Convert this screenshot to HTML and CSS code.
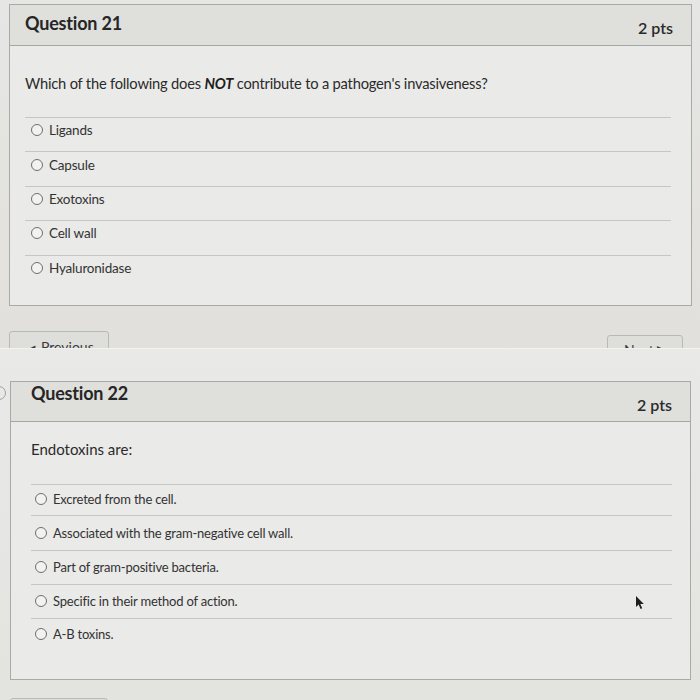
FILE: index.html
```html
<!DOCTYPE html>
<html>
<head>
<meta charset="utf-8">
<link rel="stylesheet" href="styles.css">
</head>
<body>
<section class="shot shot-top">
  <div class="card card-top">
    <div class="card-head">
      <h2 class="q-title">Question 21</h2>
      <span class="pts">2 pts</span>
    </div>
    <div class="card-body">
      <p class="q-text">Which of the following does <b><i>NOT</i></b> contribute to a pathogen's invasiveness?</p>
      <ul class="answers">
        <li><span class="radio"></span>Ligands</li>
        <li><span class="radio"></span>Capsule</li>
        <li><span class="radio"></span>Exotoxins</li>
        <li><span class="radio"></span>Cell wall</li>
        <li><span class="radio"></span>Hyaluronidase</li>
      </ul>
    </div>
  </div>
  <div class="nav">
    <div class="btn btn-prev"><span class="tri">◀</span>Previous</div>
    <div class="btn btn-next">Next ▶</div>
  </div>
</section>
<section class="shot shot-bottom">
  <span class="edge-dot"></span>
  <div class="card card-bot">
    <div class="card-head">
      <h2 class="q-title">Question 22</h2>
      <span class="pts">2 pts</span>
    </div>
    <div class="card-body">
      <p class="q-text">Endotoxins are:</p>
      <ul class="answers">
        <li><span class="radio"></span>Excreted from the cell.</li>
        <li><span class="radio"></span>Associated with the gram-negative cell wall.</li>
        <li><span class="radio"></span>Part of gram-positive bacteria.</li>
        <li><span class="radio"></span>Specific in their method of action.<svg class="cursor" width="10" height="15" viewBox="0 0 10 15"><path d="M1 1 L1 12 L3.6 9.6 L5.6 14 L7.2 13.3 L5.3 9 L8.8 9 Z" fill="#1f1f22"/></svg></li>
        <li><span class="radio"></span>A-B toxins.</li>
      </ul>
    </div>
  </div>
  <div class="nav nav-bot">
    <div class="btn btn-prev2"></div>
  </div>
</section>
</body>
</html>
```
FILE: styles.css
```css
* { box-sizing: border-box; }
html, body { margin: 0; padding: 0; }
body {
  width: 700px;
  height: 700px;
  overflow: hidden;
  font-family: Lato, "Open Sans", sans-serif;
  color: #2b2b2b;
  background: #e4e4e0;
}
.shot { position: relative; overflow: hidden; }
.shot-top {
  height: 348px;
  background: linear-gradient(180deg, #e6e6e4 0%, #e1e0dc 100%);
  padding: 4px 9px 0 9px;
}
.shot-bottom {
  height: 352px;
  background: linear-gradient(180deg, #e9eae7 0%, #e3e4e0 100%);
  padding: 32px 10px 0 10px;
  border-top: 1px solid #f2f2f0;
}
.card {
  border: 1px solid #a9a9a6;
  background: #eaeae8;
}
.card-top { width: 683px; }
.card-bot { width: 681px; }
.card-head {
  display: flex;
  justify-content: space-between;
  background: #dfdfdc;
  border-bottom: 1px solid #a6a6a3;
}
.card-top .card-head { height: 41px; padding: 7px 18px 0 15px; }
.card-bot .card-head { height: 40px; padding: 0 18px 0 20px; }
.q-title {
  margin: 0;
  font-size: 18px;
  font-weight: 700;
  color: #262626;
  letter-spacing: -0.2px;
}
.pts {
  font-size: 16px;
  font-weight: 600;
  color: #2a2a2a;
  padding-top: 6px;
}
.card-bot .pts { padding-top: 13px; }
.card-body { padding: 0 20px 0 15px; }
.card-top .card-body { height: 259px; }
.card-bot .card-body { height: 257px; padding: 0 18px 0 20px; }
.q-text {
  margin: 0;
  font-size: 14.7px;
  color: #2b2b2b;
  letter-spacing: -0.2px;
}
.card-top .q-text { padding: 28px 0 25px; }
.card-bot .q-text { padding: 18px 0 26px; font-size: 15px; letter-spacing: 0; }
.q-text b { font-weight: 700; color: #1e1e1e; }
.answers {
  list-style: none;
  margin: 0;
  padding: 0;
}
.answers li {
  position: relative;
  display: flex;
  align-items: center;
  border-top: 1px solid #c6c6c3;
  font-size: 13.5px;
  color: #333;
  letter-spacing: -0.2px;
}
.card-top .answers li { height: 34.4px; padding-left: 6px; padding-bottom: 9px; }
.card-bot .answers li { height: 34px; padding-left: 4px; font-size: 13px; padding-bottom: 2px; }
.card-bot .answers li:first-child { height: 31px; }
.card-bot .answers li:nth-child(2) { height: 35px; padding-bottom: 0; }
.card-bot .answers li:last-child { padding-bottom: 3px; }
.radio {
  width: 12px;
  height: 12px;
  border: 1px solid #6f6f6d;
  border-radius: 50%;
  background: #f2f2f0;
  margin-right: 6px;
  flex: none;
}
.cursor { position: absolute; left: 604px; top: 10px; }
.nav {
  display: flex;
  justify-content: space-between;
  padding-top: 25px;
}
.btn {
  height: 30px;
  border: 1px solid #b9b9b6;
  border-radius: 3px;
  background: #dedfdb;
  font-size: 14px;
  color: #3a3a3a;
  padding: 6px 0 0 20px;
}
.btn-prev { width: 100px; }
.btn-prev .tri { font-size: 7px; margin-right: 6px; vertical-align: 2px; }
.btn-next { width: 76px; margin-top: 4px; margin-right: 8px; padding-left: 16px; padding-top: 5px; }
.nav-bot { padding-top: 18px; }
.btn-prev2 { width: 98px; }
.edge-dot {
  position: absolute;
  left: -8px;
  top: 37px;
  width: 14px;
  height: 14px;
  border: 1px solid #a0a09c;
  border-radius: 50%;
}
```
